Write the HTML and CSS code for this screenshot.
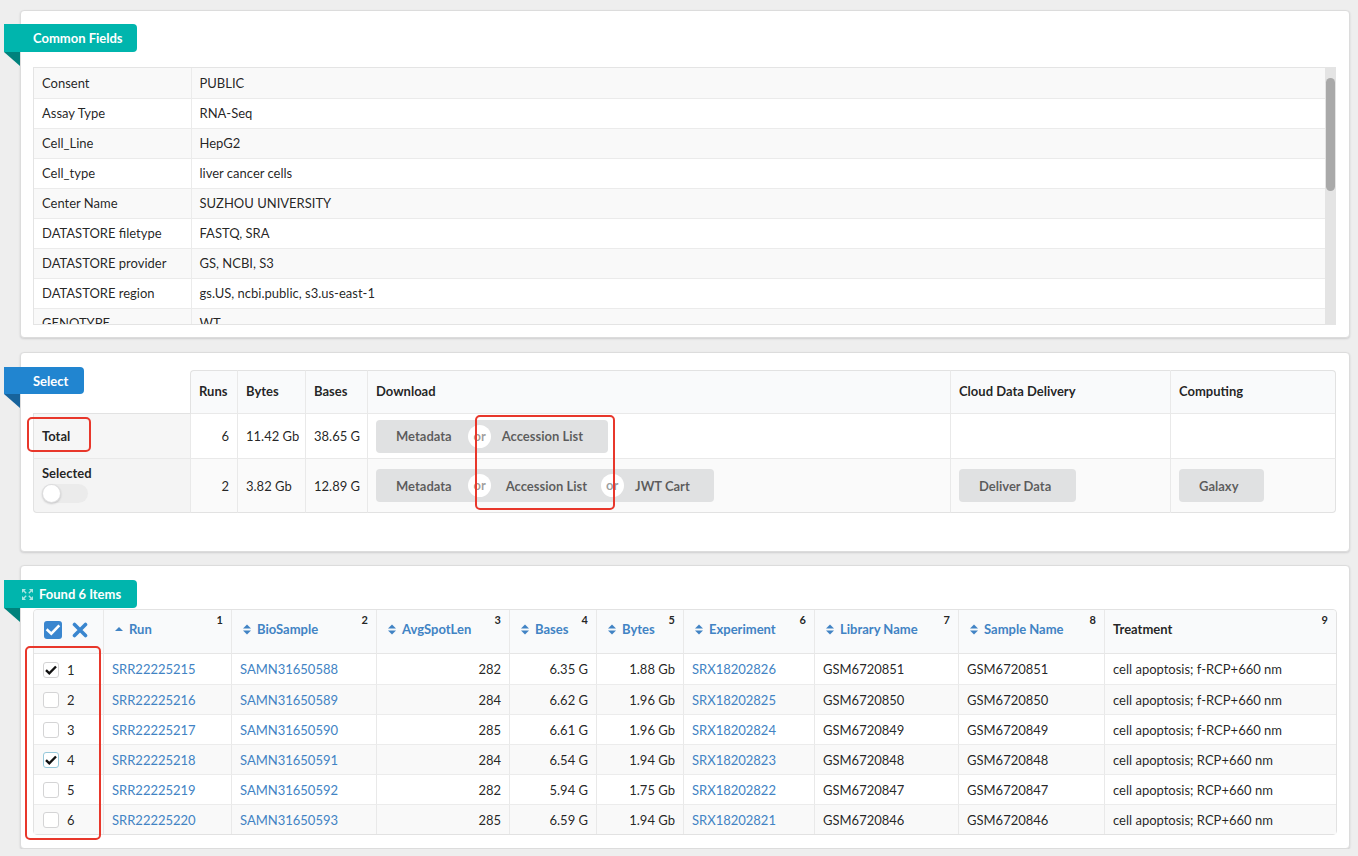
FILE: index.html
```html
<!DOCTYPE html>
<html>
<head>
<meta charset="utf-8">
<link rel="stylesheet" href="styles.css">
</head>
<body>
<div class="page">

  <section class="panel p-common">
    <div class="ribbon teal">Common Fields</div>
    <div class="cf-box">
      <div class="cf-view">
        <table class="cf">
          <colgroup><col class="cf-k"><col></colgroup>
          <tbody>
            <tr><td>Consent</td><td>PUBLIC</td></tr>
            <tr><td>Assay Type</td><td>RNA-Seq</td></tr>
            <tr><td>Cell_Line</td><td>HepG2</td></tr>
            <tr><td>Cell_type</td><td>liver cancer cells</td></tr>
            <tr><td>Center Name</td><td>SUZHOU UNIVERSITY</td></tr>
            <tr><td>DATASTORE filetype</td><td>FASTQ, SRA</td></tr>
            <tr><td>DATASTORE provider</td><td>GS, NCBI, S3</td></tr>
            <tr><td>DATASTORE region</td><td>gs.US, ncbi.public, s3.us-east-1</td></tr>
            <tr><td>GENOTYPE</td><td>WT</td></tr>
            <tr><td>Instrument</td><td>Illumina NovaSeq 6000</td></tr>
            <tr><td>LibraryLayout</td><td>PAIRED</td></tr>
            <tr><td>LibrarySelection</td><td>cDNA</td></tr>
          </tbody>
        </table>
      </div>
      <div class="vscroll"><div class="thumb"></div></div>
    </div>
  </section>

  <section class="panel p-select">
    <div class="ribbon blue">Select</div>
    <table class="sel">
      <colgroup>
        <col class="s-label"><col class="s-runs"><col class="s-bytes"><col class="s-bases">
        <col class="s-dl"><col class="s-cloud"><col class="s-comp">
      </colgroup>
      <thead>
        <tr>
          <th class="blank"></th>
          <th class="first">Runs</th>
          <th>Bytes</th>
          <th>Bases</th>
          <th>Download</th>
          <th>Cloud Data Delivery</th>
          <th class="last">Computing</th>
        </tr>
      </thead>
      <tbody>
        <tr class="r-total">
          <td class="lbl">Total</td>
          <td class="num">6</td>
          <td>11.42 Gb</td>
          <td>38.65 G</td>
          <td>
            <div class="btns">
              <span class="btn b-meta">Metadata</span><span class="or"></span><span class="btn b-acc1">Accession List</span>
            </div>
          </td>
          <td></td>
          <td class="last"></td>
        </tr>
        <tr class="r-sel">
          <td class="lbl lbl-sel">
            <div>Selected</div>
            <div class="toggle"><span class="knob"></span></div>
          </td>
          <td class="num">2</td>
          <td>3.82 Gb</td>
          <td>12.89 G</td>
          <td>
            <div class="btns">
              <span class="btn b-meta">Metadata</span><span class="or"></span><span class="btn b-acc2">Accession List</span><span class="or"></span><span class="btn b-jwt">JWT Cart</span>
            </div>
          </td>
          <td><span class="btn single">Deliver Data</span></td>
          <td class="last"><span class="btn single">Galaxy</span></td>
        </tr>
      </tbody>
    </table>
    <div class="mark mark-total"></div>
    <div class="mark mark-acc"></div>
  </section>

  <section class="panel p-items">
    <div class="ribbon teal">
      <svg class="expand" width="11" height="11" viewBox="0 0 11 11">
        <g stroke="#a9e6e2" stroke-width="1.4" fill="none">
          <path d="M1.5 1.5 L4.2 4.2 M9.5 1.5 L6.8 4.2 M1.5 9.5 L4.2 6.8 M9.5 9.5 L6.8 6.8"/>
        </g>
        <g fill="#a9e6e2">
          <path d="M0 0 H4 L0 4 Z M11 0 V4 L7 0 Z M0 11 V7 L4 11 Z M11 11 H7 L11 7 Z"/>
        </g>
      </svg>
      <span>Found 6 Items</span>
    </div>
    <table class="data">
      <colgroup>
        <col class="c-chk"><col class="c-run"><col class="c-bs"><col class="c-avg"><col class="c-bases">
        <col class="c-bytes"><col class="c-exp"><col class="c-lib"><col class="c-sn"><col class="c-tr">
      </colgroup>
      <thead>
        <tr>
          <th class="hchk">
            <svg width="18" height="18" viewBox="0 0 18 18"><rect x="0" y="0" width="18" height="18" rx="3" fill="#3a86cf"/><path d="M3.6 9.2 L7.3 12.7 L14.4 5.4" stroke="#fff" stroke-width="2.6" fill="none" stroke-linecap="square"/></svg>
            <svg class="hx" width="16" height="16" viewBox="0 0 16 16"><path d="M2.5 2.5 L13.5 13.5 M13.5 2.5 L2.5 13.5" stroke="#3a86cf" stroke-width="3.6" stroke-linecap="round"/></svg>
          </th>
          <th><span class="ic"><svg width="8" height="11" viewBox="0 0 8 11"><path d="M0 7 L4 3 L8 7 Z" fill="#4183c4"/></svg></span>Run<span class="cn">1</span></th>
          <th><span class="ic"><svg width="8" height="11" viewBox="0 0 8 11"><path d="M0 4.5 L4 0.5 L8 4.5 Z M0 6.5 L4 10.5 L8 6.5 Z" fill="#4183c4"/></svg></span>BioSample<span class="cn">2</span></th>
          <th><span class="ic"><svg width="8" height="11" viewBox="0 0 8 11"><path d="M0 4.5 L4 0.5 L8 4.5 Z M0 6.5 L4 10.5 L8 6.5 Z" fill="#4183c4"/></svg></span>AvgSpotLen<span class="cn">3</span></th>
          <th><span class="ic"><svg width="8" height="11" viewBox="0 0 8 11"><path d="M0 4.5 L4 0.5 L8 4.5 Z M0 6.5 L4 10.5 L8 6.5 Z" fill="#4183c4"/></svg></span>Bases<span class="cn">4</span></th>
          <th><span class="ic"><svg width="8" height="11" viewBox="0 0 8 11"><path d="M0 4.5 L4 0.5 L8 4.5 Z M0 6.5 L4 10.5 L8 6.5 Z" fill="#4183c4"/></svg></span>Bytes<span class="cn">5</span></th>
          <th><span class="ic"><svg width="8" height="11" viewBox="0 0 8 11"><path d="M0 4.5 L4 0.5 L8 4.5 Z M0 6.5 L4 10.5 L8 6.5 Z" fill="#4183c4"/></svg></span>Experiment<span class="cn">6</span></th>
          <th><span class="ic"><svg width="8" height="11" viewBox="0 0 8 11"><path d="M0 4.5 L4 0.5 L8 4.5 Z M0 6.5 L4 10.5 L8 6.5 Z" fill="#4183c4"/></svg></span>Library Name<span class="cn">7</span></th>
          <th><span class="ic"><svg width="8" height="11" viewBox="0 0 8 11"><path d="M0 4.5 L4 0.5 L8 4.5 Z M0 6.5 L4 10.5 L8 6.5 Z" fill="#4183c4"/></svg></span>Sample Name<span class="cn">8</span></th>
          <th class="plain">Treatment<span class="cn">9</span></th>
        </tr>
      </thead>
      <tbody>
        <tr>
          <td><span class="cb on"><svg width="12" height="10" viewBox="0 0 12 10"><path d="M1 5.2 L4.3 8.3 L11 1.5" stroke="#111" stroke-width="2.4" fill="none"/></svg></span><span class="rn">1</span></td>
          <td><a>SRR22225215</a></td><td><a>SAMN31650588</a></td><td class="num">282</td><td class="num">6.35 G</td><td class="num">1.88 Gb</td><td><a>SRX18202826</a></td><td>GSM6720851</td><td>GSM6720851</td><td>cell apoptosis; f-RCP+660 nm</td>
        </tr>
        <tr>
          <td><span class="cb"></span><span class="rn">2</span></td>
          <td><a>SRR22225216</a></td><td><a>SAMN31650589</a></td><td class="num">284</td><td class="num">6.62 G</td><td class="num">1.96 Gb</td><td><a>SRX18202825</a></td><td>GSM6720850</td><td>GSM6720850</td><td>cell apoptosis; f-RCP+660 nm</td>
        </tr>
        <tr>
          <td><span class="cb"></span><span class="rn">3</span></td>
          <td><a>SRR22225217</a></td><td><a>SAMN31650590</a></td><td class="num">285</td><td class="num">6.61 G</td><td class="num">1.96 Gb</td><td><a>SRX18202824</a></td><td>GSM6720849</td><td>GSM6720849</td><td>cell apoptosis; f-RCP+660 nm</td>
        </tr>
        <tr>
          <td><span class="cb on focus"><svg width="12" height="10" viewBox="0 0 12 10"><path d="M1 5.2 L4.3 8.3 L11 1.5" stroke="#111" stroke-width="2.4" fill="none"/></svg></span><span class="rn">4</span></td>
          <td><a>SRR22225218</a></td><td><a>SAMN31650591</a></td><td class="num">284</td><td class="num">6.54 G</td><td class="num">1.94 Gb</td><td><a>SRX18202823</a></td><td>GSM6720848</td><td>GSM6720848</td><td>cell apoptosis; RCP+660 nm</td>
        </tr>
        <tr>
          <td><span class="cb"></span><span class="rn">5</span></td>
          <td><a>SRR22225219</a></td><td><a>SAMN31650592</a></td><td class="num">282</td><td class="num">5.94 G</td><td class="num">1.75 Gb</td><td><a>SRX18202822</a></td><td>GSM6720847</td><td>GSM6720847</td><td>cell apoptosis; RCP+660 nm</td>
        </tr>
        <tr>
          <td><span class="cb"></span><span class="rn">6</span></td>
          <td><a>SRR22225220</a></td><td><a>SAMN31650593</a></td><td class="num">285</td><td class="num">6.59 G</td><td class="num">1.94 Gb</td><td><a>SRX18202821</a></td><td>GSM6720846</td><td>GSM6720846</td><td>cell apoptosis; RCP+660 nm</td>
        </tr>
      </tbody>
    </table>
    <div class="mark mark-chk"></div>
  </section>

</div>
</body>
</html>
```

FILE: styles.css
```css
* { box-sizing: border-box; }

html, body {
  margin: 0;
  padding: 0;
  background: #eeeeee;
  font-family: Lato, "Open Sans", "Liberation Sans", sans-serif;
  font-size: 13px;
  color: rgba(0, 0, 0, 0.87);
}

.page {
  padding: 10px 8px 0 20px;
  display: flex;
  flex-direction: column;
  gap: 13px;
}

.panel {
  position: relative;
  background: #fff;
  border: 1px solid #dcdcdc;
  border-radius: 4px;
  box-shadow: 0 1px 2px rgba(34, 36, 38, 0.15);
}

.p-common { padding: 56px 13px 12px 12px; }
.p-select { padding: 17px 13px 38px 12px; margin-top: 1px; }
.p-items  { padding: 43px 13px 13px 12px; }

/* ribbons */
.ribbon {
  position: absolute;
  left: -17px;
  top: 14px;
  height: 28px;
  padding: 0 14px 0 29px;
  color: #fff;
  font-weight: 700;
  font-size: 13px;
  border-radius: 0 4px 4px 0;
  z-index: 5;
  display: flex;
  align-items: center;
}
.p-common .ribbon { top: 13px; }
.ribbon::after {
  content: "";
  position: absolute;
  top: 100%;
  left: 0;
  width: 0;
  height: 0;
  border-style: solid;
  border-width: 0 16px 14px 0;
  border-color: transparent;
}
.ribbon.teal { background: #00b5ad; }
.ribbon.teal::after { border-right-color: #00827c; }
.ribbon.blue { background: #2185d0; padding-right: 16px; height: 27px; }
.ribbon.blue::after { border-right-color: #17639c; }
.p-items .ribbon { padding-left: 18px; padding-right: 16px; }
.expand { margin-right: 6px; }

/* common fields */
.cf-box {
  display: flex;
  height: 258px;
  border-top: 1px solid #e4e4e4;
  border-left: 1px solid #e4e4e4;
  border-bottom: 1px solid #e4e4e4;
}
.cf-view {
  flex: 1;
  overflow: hidden;
}
.vscroll {
  width: 11px;
  flex: none;
  background: #e4e4e4;
  padding: 10px 1px 0 1px;
}
.thumb {
  height: 113px;
  border-radius: 5px;
  background: #a9a9a9;
}
.cf {
  width: 100%;
  border-collapse: collapse;
  table-layout: fixed;
}
.cf-k { width: 157px; }
.cf td {
  height: 30px;
  padding: 0 8px;
  border-top: 1px solid #ebebeb;
  white-space: nowrap;
}
.cf tr:first-child td { border-top: none; }
.cf td + td { border-left: 1px solid #ebebeb; }
.cf tr:nth-child(odd) td { background: #f9f9f9; }

/* select table */
.sel {
  width: 100%;
  border-collapse: separate;
  border-spacing: 0;
  table-layout: fixed;
}
.s-label { width: 157px; }
.s-runs  { width: 47px; }
.s-bytes { width: 68px; }
.s-bases { width: 62px; }
.s-dl    { width: 583px; }
.s-cloud { width: 220px; }
.s-comp  { width: 166px; }

.sel th {
  height: 44px;
  text-align: left;
  font-weight: 700;
  padding: 0 8px 2px 8px;
  background: #f9fafb;
  border-top: 1px solid #e2e2e2;
  border-left: 1px solid #e9e9e9;
  border-bottom: 1px solid #e9e9e9;
}
.sel th.blank {
  background: transparent;
  border: none;
  border-bottom: 1px solid #e2e2e2;
}
.sel th.first { border-left: 1px solid #e2e2e2; border-top-left-radius: 4px; }
.sel th.last, .sel td.last { border-right: 1px solid #e2e2e2; }
.sel th.last { border-top-right-radius: 4px; }
.sel td {
  padding: 0 8px;
  border-left: 1px solid #e9e9e9;
  white-space: nowrap;
  vertical-align: middle;
}
.sel td.lbl {
  border-left: 1px solid #e2e2e2;
  background: #f6f6f6;
  font-weight: 700;
}
.sel .r-total td { height: 45px; border-bottom: 1px solid #e9e9e9; }
.sel .r-sel td { height: 54px; border-bottom: 1px solid #e2e2e2; background: #fafafa; }
.sel .r-sel td.lbl { background: #f4f4f4; border-bottom-left-radius: 4px; }
.sel .r-sel td.last { border-bottom-right-radius: 4px; }
.sel td.num { text-align: right; }
.sel td.lbl-sel { vertical-align: top; padding-top: 6px; }

.toggle {
  margin-top: 3px;
  width: 46px;
  height: 19px;
  border-radius: 10px;
  background: #ebebeb;
  position: relative;
}
.knob {
  position: absolute;
  left: 0;
  top: 0;
  width: 19px;
  height: 19px;
  border-radius: 50%;
  background: #fff;
  box-shadow: 0 1px 2px rgba(34, 36, 38, 0.2), inset 0 0 0 1px rgba(34, 36, 38, 0.15);
}

.btns { display: inline-flex; align-items: stretch; }
.btn {
  display: inline-flex;
  align-items: center;
  height: 33px;
  padding: 0 23px 0 20px;
  background: #e0e1e2;
  color: rgba(0, 0, 0, 0.6);
  font-weight: 700;
  white-space: nowrap;
}
.btns .btn:first-child { border-radius: 4px 0 0 4px; }
.btns .btn:last-child { border-radius: 0 4px 4px 0; }
.btn.b-meta { padding: 0 26px 0 20px; }
.btn.b-acc1 { padding: 0 25px 0 20px; }
.btn.b-acc2 { padding: 0 23px 0 24px; }
.btn.b-jwt  { padding: 0 24px 0 21px; }
.btn.single { border-radius: 4px; padding: 0 25px 0 20px; }
.or {
  position: relative;
  width: 4px;
  background: #e0e1e2;
  z-index: 3;
}
.or::before {
  content: "or";
  position: absolute;
  top: 50%;
  left: 50%;
  width: 23px;
  height: 23px;
  margin: -11.5px 0 0 -11.5px;
  line-height: 23px;
  text-align: center;
  border-radius: 50%;
  background: #fff;
  color: rgba(0, 0, 0, 0.4);
  font-weight: 700;
  font-size: 13px;
}

/* data table */
.data {
  width: 100%;
  border-collapse: separate;
  border-spacing: 0;
  table-layout: fixed;
  border: 1px solid #e2e2e2;
  border-radius: 4px;
}
.c-chk   { width: 69px; }
.c-run   { width: 128px; }
.c-bs    { width: 145px; }
.c-avg   { width: 133px; }
.c-bases { width: 87px; }
.c-bytes { width: 87px; }
.c-exp   { width: 131px; }
.c-lib   { width: 144px; }
.c-sn    { width: 146px; }
.c-tr    { width: 232px; }

.data th {
  position: relative;
  height: 44px;
  text-align: left;
  padding: 0 8px 6px 11px;
  background: #f9fafb;
  color: #4183c4;
  font-weight: 700;
  border-bottom: 1px solid #e6e6e6;
  white-space: nowrap;
}
.data th:first-child { border-top-left-radius: 4px; }
.data th:last-child { border-top-right-radius: 4px; }
.data th + th, .data td + td { border-left: 1px solid #e9e9e9; }
.data th.plain { color: rgba(0, 0, 0, 0.87); padding-left: 8px; }
.data th.hchk { padding-left: 10px; padding-bottom: 4px; }
.data th.hchk svg { vertical-align: middle; }
.data th.hchk .hx { margin-left: 7px; }
.ic {
  display: inline-block;
  width: 8px;
  margin-right: 6px;
  vertical-align: -1px;
}
.ic svg { display: block; }
.cn {
  position: absolute;
  top: 3px;
  right: 8px;
  color: rgba(0, 0, 0, 0.87);
  font-size: 11px;
  font-weight: 700;
}
.data td {
  height: 30px;
  padding: 0 8px;
  border-top: 1px solid #ececec;
  white-space: nowrap;
}
.data tbody tr:first-child td { border-top: none; }
.data tbody tr:nth-child(even) td { background: #f9f9f9; }
.data td.num { text-align: right; }
.data a { color: #4183c4; text-decoration: none; }

.cb {
  display: inline-flex;
  align-items: center;
  justify-content: center;
  width: 16px;
  height: 16px;
  margin-left: 1px;
  border: 1px solid #d4d4d5;
  border-radius: 3px;
  background: #fff;
  vertical-align: middle;
}
.cb.focus { border-color: #96c8da; }
.rn { margin-left: 8px; vertical-align: middle; }

/* red annotation marks */
.mark {
  position: absolute;
  border: 2px solid #e8372b;
  border-radius: 5px;
  z-index: 6;
  pointer-events: none;
}
.mark-total { left: 6px; top: 64px; width: 64px; height: 35px; }
.mark-acc { left: 454px; top: 62px; width: 140px; height: 95px; }
.mark-chk { left: 4px; top: 80px; width: 76px; height: 194px; }
```
